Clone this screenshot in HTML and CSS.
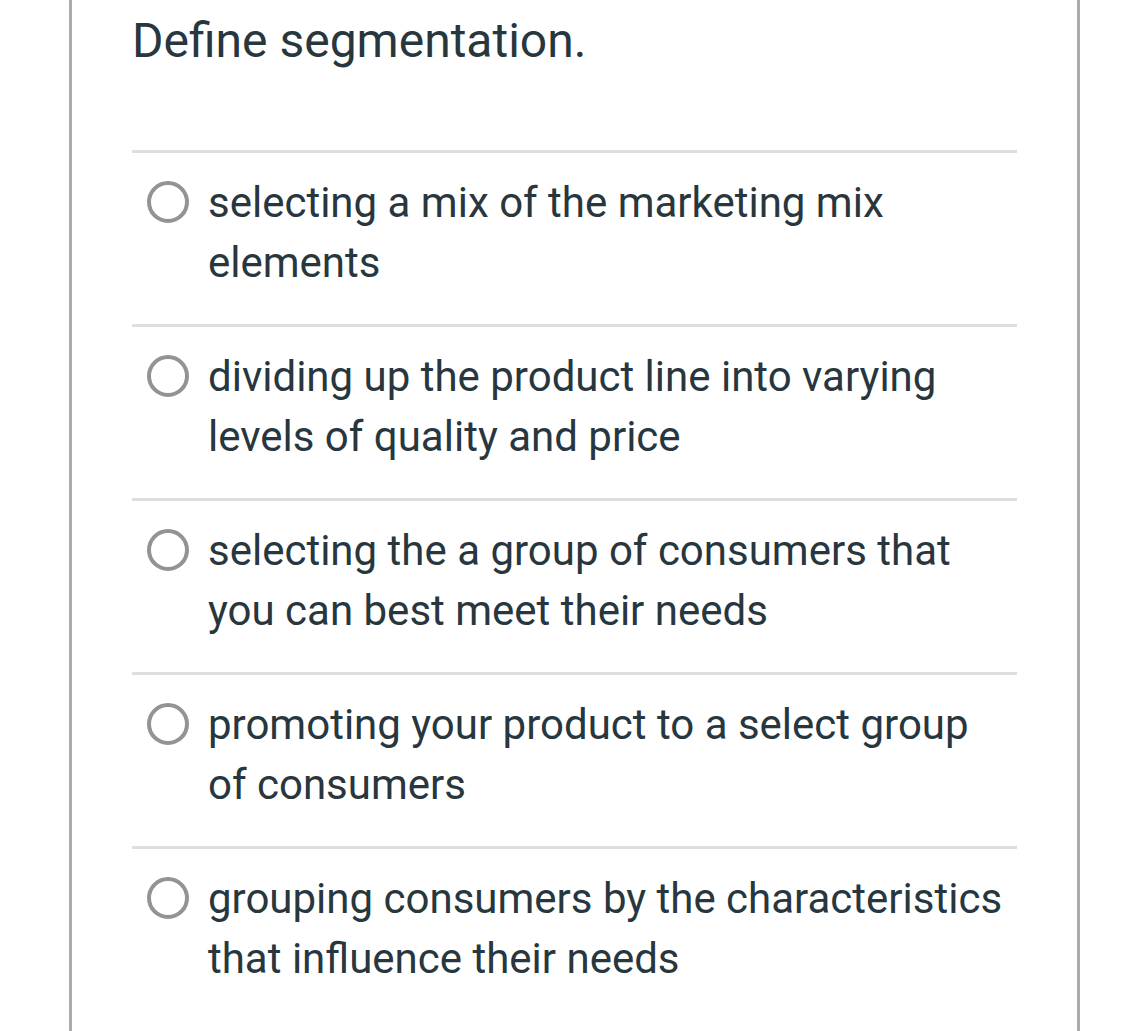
FILE: index.html
```html
<!DOCTYPE html>
<html>
<head>
<meta charset="utf-8">
<link rel="stylesheet" href="styles.css">
</head>
<body>
<div class="frame">
  <h1 class="question">Define segmentation.</h1>
  <ul class="options">
    <li class="option"><span class="radio"></span><span class="label">selecting a mix of the marketing mix elements</span></li>
    <li class="option"><span class="radio"></span><span class="label">dividing up the product line into varying levels of quality and price</span></li>
    <li class="option"><span class="radio"></span><span class="label">selecting the a group of consumers that you can best meet their needs</span></li>
    <li class="option"><span class="radio"></span><span class="label">promoting your product to a select group of consumers</span></li>
    <li class="option"><span class="radio"></span><span class="label">grouping consumers by the characteristics that influence their needs</span></li>
  </ul>
</div>
</body>
</html>
```
FILE: styles.css
```css
html, body {
  margin: 0;
  padding: 0;
  background: #ffffff;
  height: 100%;
  overflow: hidden;
}
body {
  font-family: Roboto, "Liberation Sans", sans-serif;
  color: #28363e;
}
.frame {
  margin-left: 69px;
  width: 885px;
  min-height: 1031px;
  border-left: 3px solid #ababab;
  border-right: 3px solid #ababab;
  padding: 13px 60px 0 60px;
}
.question {
  margin: 0 0 81px 0;
  font-size: 48px;
  font-weight: 400;
  line-height: 56px;
}
.options {
  list-style: none;
  margin: 0;
  padding: 0;
}
.option {
  display: flex;
  align-items: flex-start;
  border-top: 3px solid #dedede;
  padding: 20px 0 31px 15px;
  min-height: 120px;
}
.radio {
  flex: none;
  width: 34px;
  height: 34px;
  border: 4px solid #939396;
  border-radius: 50%;
  margin-top: 8px;
  margin-right: 19px;
}
.label {
  font-size: 42px;
  line-height: 60px;
}
```
